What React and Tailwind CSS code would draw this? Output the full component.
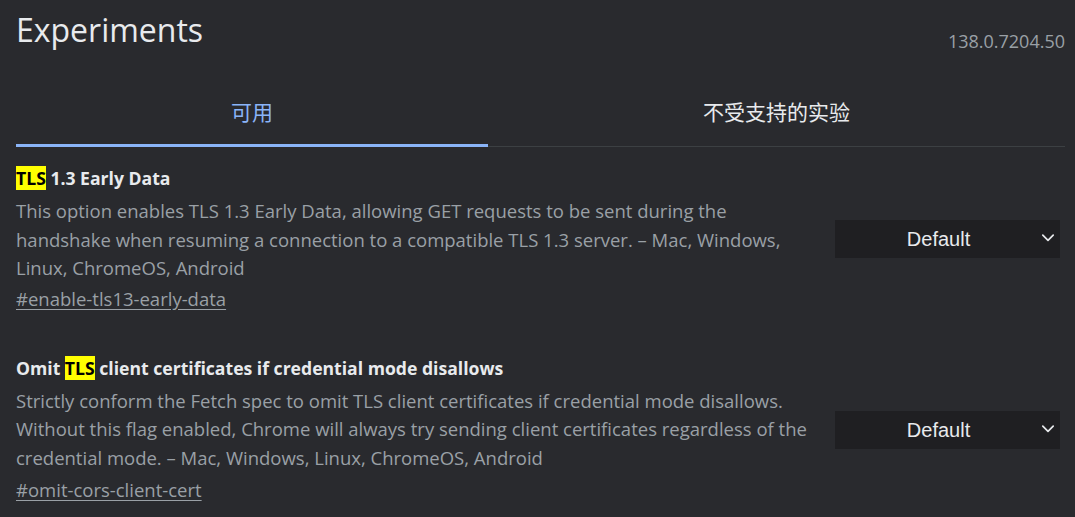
import React from "react";

const FONT = "font-['Segoe_UI','Open_Sans','Noto_Sans_CJK_SC',sans-serif]";

function Hl({ children }) {
  return <span className="bg-[#ffff00] text-black">{children}</span>;
}

function Chevron() {
  return (
    <svg width="14" height="14" viewBox="0 0 14 14" fill="none" className="text-[#e8eaed]">
      <path d="M1.8 4.2 L7 9.4 L12.2 4.2" stroke="currentColor" strokeWidth="1.7" strokeLinecap="round" strokeLinejoin="round" />
    </svg>
  );
}

function Select() {
  return (
    <div className="relative flex h-[38px] w-[225px] items-center justify-center bg-[#1f1f22] pr-[18px]">
      <span className="font-['Liberation_Sans',Arial,sans-serif] text-[20px] leading-none text-[#e8eaed]">Default</span>
      <span className="absolute right-[5px] top-[11px] flex">
        <Chevron />
      </span>
    </div>
  );
}

function Item({ title, lines, link, className, linkClass }) {
  return (
    <div className={"flex items-center justify-between pr-[15px] " + (className || "")}>
      <div className="w-[800px]">
        <div className="text-[17.6px] font-bold leading-[24px] text-[#e8eaed]">{title}</div>
        <p className="mt-[7px] text-[18.5px] leading-[28.5px] text-[#9aa0a6]">
          {lines.map((l, i) => (
            <React.Fragment key={i}>
              {l}
              {i < lines.length - 1 && <br />}
            </React.Fragment>
          ))}
        </p>
        <a className={"block text-[18.5px] leading-[28px] text-[#9aa0a6] underline underline-offset-[3px] " + (linkClass || "mt-[2px]")} href="#">
          {link}
        </a>
      </div>
      <Select />
    </div>
  );
}

export default function App() {
  return (
    <div className={"h-[517px] w-[1075px] overflow-hidden bg-[#292a2e] pl-[16px] " + FONT}>
      <div className="flex items-start justify-between pr-[10px] pt-[10px]">
        <h1 className="text-[32px] leading-[40px] font-normal text-[#e8eaed]">Experiments</h1>
        <div className="pt-[19px] text-[18px] leading-[24px] text-[#9aa0a6]">138.0.7204.50</div>
      </div>
      <div className="mr-[10px] mt-[26px] flex border-b border-[#3c4043]">
        <div className="-mb-px flex h-[68px] w-[472px] items-center justify-center border-b-[3px] border-[#8ab4f8] pt-[3px] text-[21px] text-[#8ab4f8]">
          可用
        </div>
        <div className="flex h-[67px] flex-1 items-center justify-center text-[21px] text-[#e8eaed]">
          不受支持的实验
        </div>
      </div>
      <Item
        className="mt-[19px]"
        title={<><Hl>TLS</Hl> 1.3 Early Data</>}
        lines={[
          "This option enables TLS 1.3 Early Data, allowing GET requests to be sent during the",
          "handshake when resuming a connection to a compatible TLS 1.3 server. – Mac, Windows,",
          "Linux, ChromeOS, Android",
        ]}
        link="#enable-tls13-early-data"
      />
      <Item
        className="mt-[43px]"
        linkClass="mt-[4px]"
        title={<>Omit <Hl>TLS</Hl> client certificates if credential mode disallows</>}
        lines={[
          "Strictly conform the Fetch spec to omit TLS client certificates if credential mode disallows.",
          "Without this flag enabled, Chrome will always try sending client certificates regardless of the",
          "credential mode. – Mac, Windows, Linux, ChromeOS, Android",
        ]}
        link="#omit-cors-client-cert"
      />
    </div>
  );
}
